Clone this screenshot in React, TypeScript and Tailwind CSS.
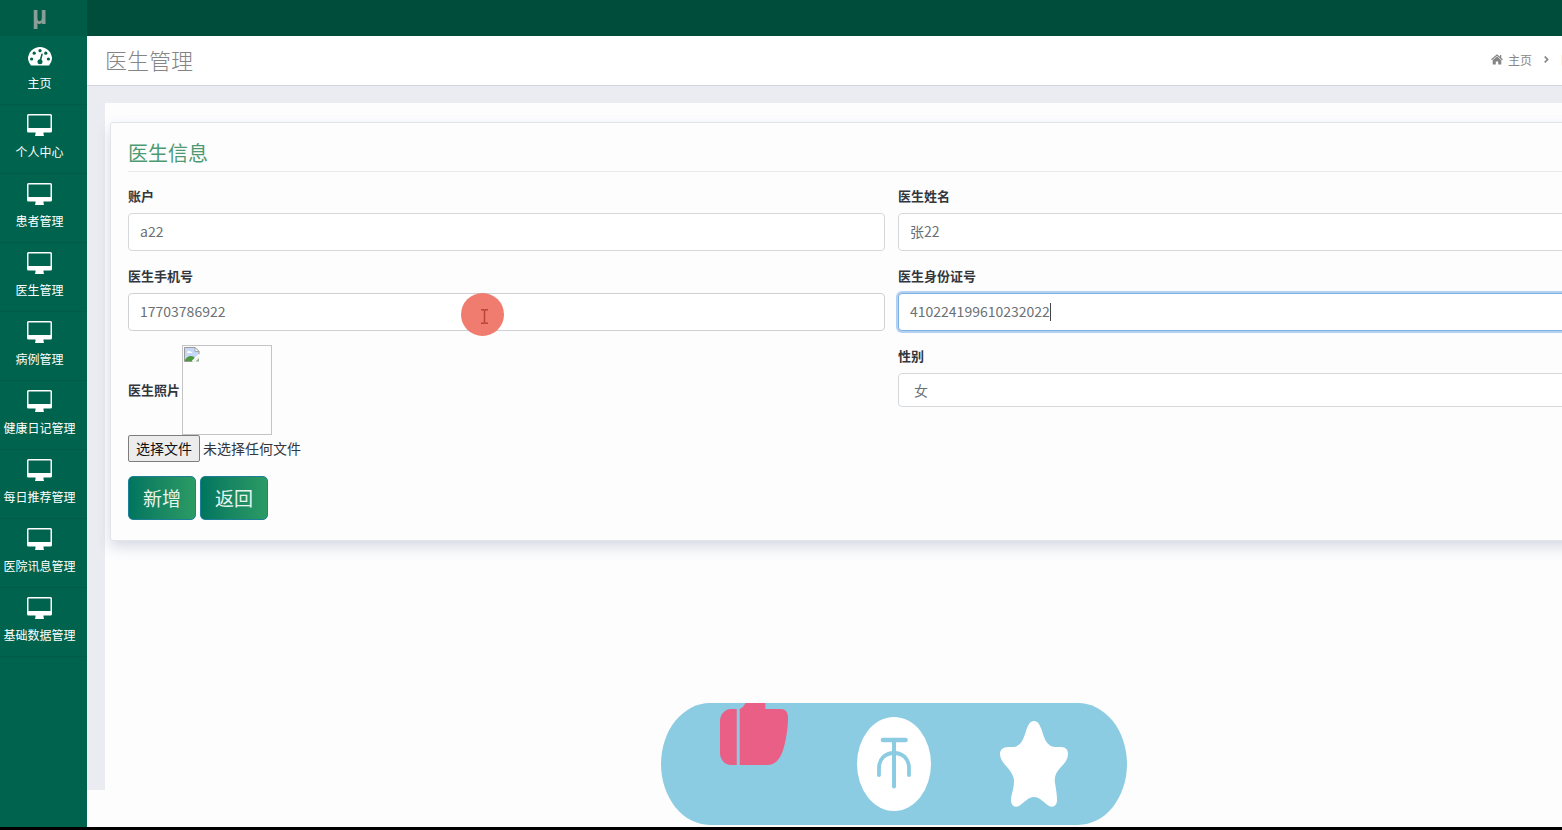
import React from "react";
import { FaAngleRight } from "react-icons/fa";

const menu = [
  "个人中心",
  "患者管理",
  "医生管理",
  "病例管理",
  "健康日记管理",
  "每日推荐管理",
  "医院讯息管理",
  "基础数据管理",
];

const inputClass =
  "block h-[38px] w-full rounded-[4px] border bg-white px-[11px] pb-[2px] text-[14px] text-[#6b7075] outline-none";

function DashboardIcon() {
  return (
    <svg width="24" height="19" viewBox="0 0 24 19" aria-hidden="true">
      <path d="M3 18.500A12 12 0 0 1 0 12a12 12 0 0 1 24 0 12 12 0 0 1-3 6.500z" fill="#fff" />
      <g fill="#00634d">
        <circle cx="3.600" cy="12" r="1.600" />
        <circle cx="6.200" cy="6.200" r="1.600" />
        <circle cx="12" cy="3.700" r="1.600" />
        <circle cx="17.800" cy="6.200" r="1.600" />
        <circle cx="20.400" cy="12" r="1.600" />
        <circle cx="12" cy="14.800" r="2.500" />
      </g>
      <path d="M12.200 14 14 7.200" stroke="#00634d" strokeWidth="1.500" strokeLinecap="round" />
    </svg>
  );
}

function HomeIcon() {
  return (
    <svg width="12" height="11" viewBox="0 0 12 11" className="mr-[5px]" aria-hidden="true">
      <path d="M6 2.600 10.300 6.200V10.500H7.200V7.400H4.800V10.500H1.700V6.200z" fill="#858585" />
      <path d="M.5 5.700 6 1.100 11.500 5.700M9.600 1V4" fill="none" stroke="#858585" strokeWidth="1.300" />
    </svg>
  );
}

function ScreenIcon() {
  return (
    <svg width="25" height="22" viewBox="0 0 25 22" aria-hidden="true">
      <path
        fill="#fff"
        fillRule="evenodd"
        d="M1.500 0h22A1.500 1.500 0 0 1 25 1.500v15.500a1.500 1.500 0 0 1-1.500 1.500h-7v1.500l.5 2h-9l.5-2v-1.500h-7A1.500 1.500 0 0 1 0 17V1.500A1.500 1.500 0 0 1 1.500 0zM1.500 1.500v12.500h22V1.500z"
      />
    </svg>
  );
}

function MenuItem({ label, icon }: { label: string; icon: React.ReactNode }) {
  return (
    <li className="border-b border-[#005c47]">
      <a href="#" className="flex h-[68px] flex-col items-center gap-[7px] pt-[9px] pr-2 text-[12px] text-white">
        <span className="flex h-[22px] items-center">{icon}</span>
        <span className="whitespace-nowrap leading-[18px]">{label}</span>
      </a>
    </li>
  );
}

function Field({
  id,
  label,
  children,
}: {
  id: string;
  label: string;
  children: React.ReactNode;
}) {
  return (
    <div className="flex flex-col gap-[10px] pt-[3px]">
      <label htmlFor={id} className="text-[13px] leading-[15px] font-bold text-[#33373c]">
        {label}
      </label>
      <div className="relative">{children}</div>
    </div>
  );
}

function Pointer() {
  return (
    <span className="pointer-events-none absolute top-0 left-[333px] flex size-[43px] items-center justify-center rounded-full bg-[#ef7c6e]">
      <svg width="9" height="15" viewBox="0 0 9 15" className="mt-1 ml-1" aria-hidden="true">
        <path d="M1 .8h2.500l1 .7 1-.7H8M4.500 1.500v12M1 14.200h2.500l1-.7 1 .7H8" fill="none" stroke="#b5443c" strokeWidth="1.500" />
      </svg>
    </span>
  );
}

function BrokenImage() {
  return (
    <div role="img" aria-label="医生照片" className="size-[90px] border border-[#c4c4c4] p-px">
      <svg width="16" height="16" viewBox="0 0 16 16" aria-hidden="true">
        <path d="M.5.5h10.500l4 4v4.500L9.500 14.500H.5z" fill="#c6d8f5" stroke="#9a9a9a" />
        <path d="M11 .5v4h4z" fill="#fff" stroke="#9a9a9a" strokeWidth=".8" />
        <path d="M3 5.500a1.700 1.700 0 0 1 3-1 1.500 1.500 0 0 1 2 1.500H3z" fill="#fff" />
        <path d="M1 14v-1c2-3.500 5-5 8.500-3.500l2 2.500-2 2z" fill="#4c9a3c" />
        <path d="M15.500 7.500 8.500 14.500" stroke="#fff" strokeWidth="1.800" />
        <path d="M15 11v3.500h-3.500z" fill="#8fb08a" />
      </svg>
    </div>
  );
}

function Actions() {
  return (
    <div className="absolute top-[703px] left-[661px] flex h-[122px] w-[466px] items-center justify-between rounded-[49px/61px] bg-[#8ccce2] px-[59px]">
      <button type="button" aria-label="点赞" className="self-start">
        <svg width="68" height="62" viewBox="0 0 69 62" preserveAspectRatio="none" className="block">
          <path d="M10 6H17V62H10C4 61 0 56 0 50V18C0 12 4 7 10 6z" fill="#e95f86" />
          <path d="M20 6C23 5 24 3 26 0H46V6H62C66 6 69 9 69 14C69 25 67 38 64 47C61 56 56 62 48 62H20z" fill="#e95f86" />
        </svg>
      </button>
      <button type="button" aria-label="投币">
        <svg width="74" height="94" viewBox="0 0 74 94" className="block">
          <ellipse cx="37" cy="47" rx="37" ry="47" fill="#fff" />
          <g fill="none" stroke="#8ccce2" strokeLinecap="round">
            <path d="M26 23H48.500" strokeWidth="4.600" />
            <path d="M37 24V69.500" strokeWidth="4" />
            <path d="M22 58V51C22 42 28 36 37 36S52 42 52 51V58" strokeWidth="3.800" />
          </g>
        </svg>
      </button>
      <button type="button" aria-label="收藏">
        <svg width="68" height="86" viewBox="0 0 68 86" className="block">
          <path
            d="M34 0C38 0 40 4 42 10C45 20 48 26 56 26H61C66 26 68 29 68 33C68 38 65 42 61 46C56 51 54 56 55 62C56 68 57 74 57 79C57 84 54 87 49 85C44 82 40 76 34 76S24 82 19 85C14 87 11 84 11 79C11 74 14 68 14 60C14 55 11 51 7 46C3 42 0 37 0 33C0 29 3 26 8 26H12C20 26 23 20 26 10C28 4 30 0 34 0z"
            fill="#fff"
          />
        </svg>
      </button>
    </div>
  );
}

export default function App() {
  return (
    <div className="relative flex min-h-screen flex-col overflow-hidden bg-[#fdfdfe] font-['Noto_Sans_CJK_SC',sans-serif]">
      <div className="flex flex-1">
        <aside className="w-[87px] shrink-0 bg-[#00634d]">
          <div className="flex h-9 justify-center bg-[#005b47] pr-2 font-['Liberation_Sans',sans-serif] text-[26px] leading-[30px] font-bold text-[#8d9d98]">
            µ
          </div>
          <nav aria-label="主菜单">
            <ul>
              <MenuItem label="主页" icon={<DashboardIcon />} />
              {menu.map((label) => (
                <MenuItem key={label} label={label} icon={<ScreenIcon />} />
              ))}
            </ul>
          </nav>
        </aside>

        <div className="flex min-w-0 flex-1 flex-col">
          <div className="h-9 bg-[#004d3c]" />
          <header className="-mr-[116px] flex h-[50px] items-center justify-between border-b border-[#d3d5d8] bg-white pr-[69px] pb-[2px] pl-[18px]">
            <h1 className="text-[22px] font-light text-[#858585]">医生管理</h1>
            <nav aria-label="位置" className="flex items-center text-[12px] text-[#888]">
              <HomeIcon />
              <a href="#">主页</a>
              <FaAngleRight className="mx-[9px] size-[11px]" />
              <span>医生管理</span>
            </nav>
          </header>

          <main className="-mr-[116px] flex flex-1 flex-col bg-[#ebecf1] pt-[17px] pl-[18px]">
            <div className="flex-1 bg-[#fdfdfe] px-[5px] pt-[19px]">
              <form
                onSubmit={(e) => e.preventDefault()}
                className="rounded-[3px] border border-[#e1e5ea] bg-[#fdfdfe] px-[17px] pt-[15px] pb-[20px] shadow-[0_6px_14px_rgba(60,80,120,0.2)]"
              >
                <h2 className="border-b border-[#e9ebed] pb-[3px] text-[20px] leading-[30px] text-[#4d9a72]">
                  医生信息
                </h2>
                <div className="mt-[13px] grid grid-cols-2 gap-x-[13px] gap-y-[14px]">
                  <Field id="account" label="账户">
                    <input id="account" defaultValue="a22" className={`${inputClass} border-[#d5d8db]`} />
                  </Field>
                  <Field id="name" label="医生姓名">
                    <input id="name" defaultValue="张22" className={`${inputClass} border-[#d5d8db]`} />
                  </Field>
                  <Field id="phone" label="医生手机号">
                    <input id="phone" defaultValue="17703786922" className={`${inputClass} border-[#cfd2d5]`} />
                    <Pointer />
                  </Field>
                  <Field id="idcard" label="医生身份证号">
                    <input
                      id="idcard"
                      defaultValue="410224199610232022"
                      className={`${inputClass} border-[#7fb0e4] shadow-[0_0_0_2px_#b3d1f3]`}
                    />
                    <span className="pointer-events-none absolute top-[10px] left-[152px] h-[18px] w-px bg-[#444]" />
                  </Field>
                  <div>
                    <div className="flex items-center gap-[2px]">
                      <span className="text-[13px] leading-4 font-bold text-[#33373c]">医生照片</span>
                      <BrokenImage />
                    </div>
                    <label htmlFor="photo" className="flex w-fit items-center gap-[3px] text-[14px] text-[#33373c]">
                      <span className="flex h-[27px] items-center rounded-[2px] border border-[#7d7d7d] bg-[#ececec] px-[7px] text-[#111]">
                        选择文件
                      </span>
                      <span>未选择任何文件</span>
                      <input id="photo" type="file" className="sr-only" />
                    </label>
                  </div>
                  <Field id="gender" label="性别">
                    <select
                      id="gender"
                      defaultValue="女"
                      className="block h-[34px] w-full appearance-none rounded-[4px] border border-[#d5d8db] bg-white px-[15px] text-[14px] text-[#6b7075]"
                    >
                      <option>女</option>
                      <option>男</option>
                    </select>
                  </Field>
                </div>
                <div className="mt-[14px] flex gap-1">
                  {["新增", "返回"].map((text) => (
                    <button
                      key={text}
                      type="submit"
                      className="h-11 rounded-[5px] border border-[#1c7f97] bg-linear-to-r from-[#00755f] to-[#2b9b64] px-[14px] text-[19px] text-[#e6f4ec]"
                    >
                      {text}
                    </button>
                  ))}
                </div>
              </form>
            </div>
          </main>
          <div className="h-[37px]" />
        </div>
      </div>
      <div className="h-[3px] bg-black" />
      <Actions />
    </div>
  );
}
